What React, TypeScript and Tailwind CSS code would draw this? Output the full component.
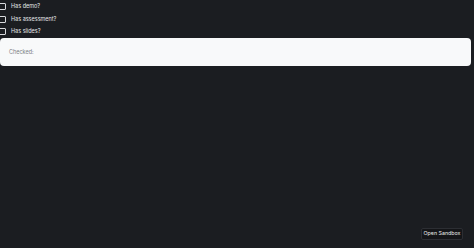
import React from "react";

function Row({ label }: { label: string }) {
  return (
    <div className="flex items-center h-[12.5px] gap-[5px]">
      <div className="w-[7px] h-[7px] border border-[#d8dadd] rounded-[1px] -ml-[1px]" />
      <span className="text-[5.5px] text-[#e6e7e9] leading-none">{label}</span>
    </div>
  );
}

export default function App() {
  return (
    <div
      className="w-[474px] h-[248px] bg-[#1b1d21] relative overflow-hidden"
      style={{ fontFamily: "Inter, 'Liberation Sans', sans-serif" }}
    >
      <div className="flex flex-col pt-[0.5px]">
        <Row label="Has demo?" />
        <Row label="Has assessment?" />
        <Row label="Has slides?" />
      </div>
      <div className="w-[471px] h-[28px] bg-[#f8f9fa] rounded-[4px] flex items-center pl-[9px]">
        <span className="text-[5.5px] text-[#7d8186]">Checked:</span>
      </div>
      <div className="absolute right-[11px] bottom-[8px] h-[12px] w-[42px] flex items-center justify-center bg-[#141518] border border-[#2c2e33] rounded-[2px]">
        <span className="text-[5.3px] text-[#eceded] leading-none whitespace-nowrap">Open Sandbox</span>
      </div>
    </div>
  );
}
